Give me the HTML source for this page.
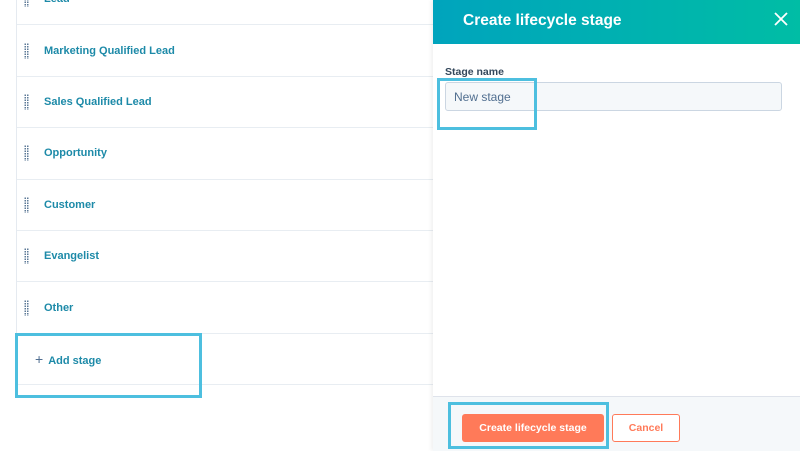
<!DOCTYPE html>
<html><head><style>
*{box-sizing:border-box;margin:0;padding:0}
body{width:800px;height:451px;overflow:hidden;background:#fff;font-family:"Liberation Sans",sans-serif;position:relative}
.list{position:absolute;left:16px;top:-26px;width:420px;border-left:1px solid #e5eaf0}
.row{height:51.4px;border-bottom:1px solid #e8edf2;position:relative}
.row span{position:absolute;left:27px;top:50%;transform:translateY(-50%);color:#1d8aa8;font-weight:bold;font-size:11px}
.grip{position:absolute;left:7px;top:50%;transform:translateY(-50%);width:5px;height:16px;background-image:radial-gradient(circle,#5d7a97 0.8px,transparent 1px);background-size:2.5px 2.5px}
.hl{position:absolute;border:3px solid #4dbfdf}
.panel{position:absolute;left:433px;top:0;width:367px;height:451px;background:#fff;box-shadow:-2px 0 4px rgba(0,0,0,.06)}
.head{height:44px;background:linear-gradient(90deg,#00a4bd,#00bda5);color:#fff;font-weight:bold;font-size:15.5px;padding:12px 0 0 30px}
.x{position:absolute;right:12px;top:12px;width:14px;height:14px}
.foot{position:absolute;left:0;top:396px;width:367px;height:55px;background:#f5f8fa;border-top:1px solid #dfe3eb}
</style></head><body>
<div class="list">
<div class="row"><div class="grip"></div><span>Lead</span></div>
<div class="row"><div class="grip"></div><span>Marketing Qualified Lead</span></div>
<div class="row"><div class="grip"></div><span>Sales Qualified Lead</span></div>
<div class="row"><div class="grip"></div><span>Opportunity</span></div>
<div class="row"><div class="grip"></div><span>Customer</span></div>
<div class="row"><div class="grip"></div><span>Evangelist</span></div>
<div class="row"><div class="grip"></div><span>Other</span></div>
<div class="row"><span style="left:18px"><b style="color:#506e91;font-weight:normal;font-size:14px;margin-right:5px">+</b>Add stage</span></div>
</div>
<div class="hl" style="left:15px;top:333px;width:187px;height:65px"></div>
<div class="panel">
<div class="head">Create lifecycle stage</div>
<svg class="x" viewBox="0 0 14 14"><path d="M1 1L13 13M13 1L1 13" stroke="#fff" stroke-width="1.8"/></svg>
<div style="position:absolute;left:12px;top:66px;font-size:10.5px;color:#33475b;font-weight:bold">Stage name</div>
<div style="position:absolute;left:12px;top:82px;width:337px;height:29px;background:#f5f8fa;border:1px solid #cbd6e2;border-radius:3px;font-size:12px;color:#516f90;padding:7px 0 0 8px">New stage</div>
<div class="foot">
<div style="position:absolute;left:29px;top:17px;width:142px;height:28px;background:#ff7a59;border-radius:3px;color:#fff;font-size:10.5px;font-weight:bold;text-align:center;line-height:28px">Create lifecycle stage</div>
<div style="position:absolute;left:179px;top:17px;width:68px;height:28px;background:#fff;border:1px solid #ff7a59;border-radius:3px;color:#ff7a59;font-size:10.5px;font-weight:bold;text-align:center;line-height:26px">Cancel</div>
</div>
</div>
<div class="hl" style="left:437px;top:78px;width:100px;height:52px"></div>
<div class="hl" style="left:448px;top:402px;width:161px;height:47px"></div>
</body></html>
